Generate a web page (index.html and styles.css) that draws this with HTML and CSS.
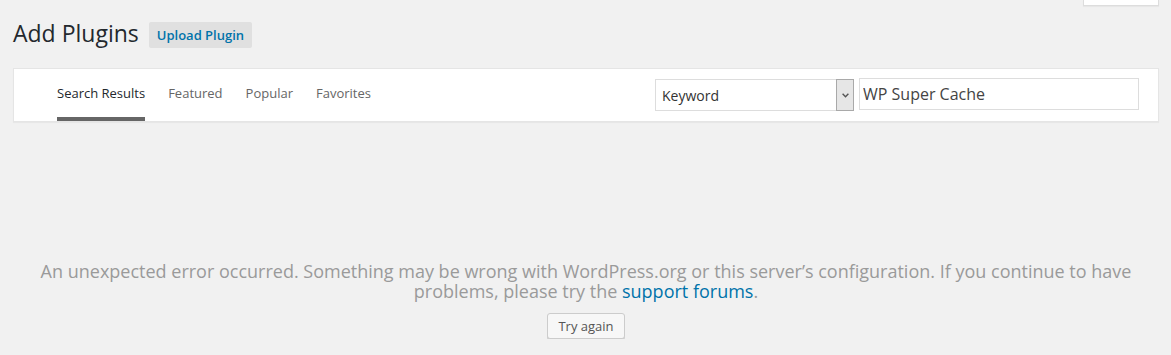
FILE: index.html
```html
<!DOCTYPE html>
<html>
<head>
    <meta charset="UTF-8" />
    <title>Add Plugins</title>
    <link rel="stylesheet" href="styles.css">
</head>

<body>
<div class="screen-meta">
    <div class="screen-meta-tab"></div>
</div>

<div class="wrap">
    <div class="page-header">
        <h1 class="page-title">Add Plugins</h1>
        <a class="title-action" href="#">Upload Plugin</a>
    </div>

    <div class="wp-filter">
        <ul class="filter-links">
            <li><a href="#" class="current">Search Results</a></li>
            <li><a href="#">Featured</a></li>
            <li><a href="#">Popular</a></li>
            <li><a href="#">Favorites</a></li>
        </ul>

        <form class="search-form">
            <label class="select-wrap">
                <select id="typeselector">
                    <option>Keyword</option>
                    <option>Author</option>
                    <option>Tag</option>
                </select>
                <span class="select-arrow">
                    <svg width="7" height="5" viewBox="0 0 7 5">
                        <path d="M0.6 0.8 L3.5 3.8 L6.4 0.8" fill="none" stroke="#555" stroke-width="1.4"/>
                    </svg>
                </span>
            </label>
            <input type="search" class="search-input" value="WP Super Cache">
        </form>
    </div>

    <div class="plugins-error">
        <p class="error-message">An unexpected error occurred. Something may be wrong with WordPress.org or this server’s configuration. If you continue to have problems, please try the <a href="#">support forums</a>.</p>
        <button class="button">Try again</button>
    </div>
</div>
</body>
</html>
```

FILE: styles.css
```css
* {
    margin: 0;
    padding: 0;
    box-sizing: border-box;
    font-family: 'Open Sans', 'Liberation Sans', sans-serif;
}

:root {
    --page-bg: #f1f1f1;
    --border-color: #e5e5e5;
    --input-border: #dddddd;
    --text-color: #23282d;
    --muted-color: #666666;
    --link-color: #0073aa;
    --error-text: #9a9a9a;
}

body {
    background-color: var(--page-bg);
    color: var(--text-color);
    font-size: 13px;
}

a {
    color: var(--link-color);
    text-decoration: none;
}

/* Screen options tab hanging from the top */
.screen-meta {
    display: flex;
    justify-content: flex-end;
    padding-right: 12px;
}

.screen-meta-tab {
    width: 76px;
    height: 6px;
    background-color: #fff;
    border: 1px solid #ddd;
    border-top: none;
    box-shadow: 0 1px 1px rgba(0, 0, 0, 0.04);
}

.wrap {
    padding: 0 12px 0 13px;
}

/* Title row */
.page-header {
    display: flex;
    align-items: flex-start;
    gap: 10px;
    padding-top: 13px;
}

.page-title {
    font-size: 23px;
    font-weight: 400;
    line-height: 29px;
    color: var(--text-color);
}

.title-action {
    margin-top: 3px;
    padding: 0 8px;
    height: 26px;
    line-height: 26px;
    background-color: #e0e0e0;
    border-radius: 2px;
    font-size: 13px;
    font-weight: 600;
}

/* Filter bar */
.wp-filter {
    display: flex;
    justify-content: space-between;
    margin-top: 20px;
    background-color: #fff;
    border: 1px solid var(--border-color);
    box-shadow: 0 1px 1px rgba(0, 0, 0, 0.04);
}

.filter-links {
    display: flex;
    gap: 23px;
    list-style: none;
    padding-left: 43px;
}

.filter-links a {
    display: block;
    padding: 15px 0;
    line-height: 18px;
    font-size: 13px;
    color: var(--muted-color);
    border-bottom: 4px solid #fff;
}

.filter-links a.current {
    color: var(--text-color);
    border-bottom-color: var(--muted-color);
}

.search-form {
    display: flex;
    align-items: flex-start;
    gap: 5px;
    padding: 9px 19px 0 0;
}

.select-wrap {
    display: flex;
    width: 199px;
    height: 32px;
    margin-top: 1px;
    border: 1px solid var(--input-border);
    background-color: #fff;
}

.select-wrap select {
    flex: 1;
    appearance: none;
    -webkit-appearance: none;
    border: none;
    outline: none;
    background: transparent;
    padding: 0 6px;
    font-size: 14px;
    color: #333;
}

.select-arrow {
    display: flex;
    align-items: center;
    justify-content: center;
    width: 18px;
    margin: -1px -1px -1px 0;
    background-color: #e6e6e6;
    border: 1px solid #a9a9a9;
}

.search-input {
    width: 280px;
    height: 32px;
    border: 1px solid var(--input-border);
    background-color: #fff;
    padding: 0 3px;
    font-size: 16px;
    font-weight: 400;
    color: #444;
    outline: none;
}

/* Error message */
.plugins-error {
    display: flex;
    flex-direction: column;
    align-items: center;
    padding-top: 139px;
}

.error-message {
    font-size: 18px;
    line-height: 20px;
    color: var(--error-text);
    text-align: center;
}

.button {
    margin-top: 12px;
    height: 26px;
    padding: 0 10px;
    font-size: 13px;
    line-height: 24px;
    color: #555;
    background-color: #f7f7f7;
    border: 1px solid #ccc;
    border-radius: 3px;
    box-shadow: 0 1px 0 #ccc;
    cursor: pointer;
}
```
